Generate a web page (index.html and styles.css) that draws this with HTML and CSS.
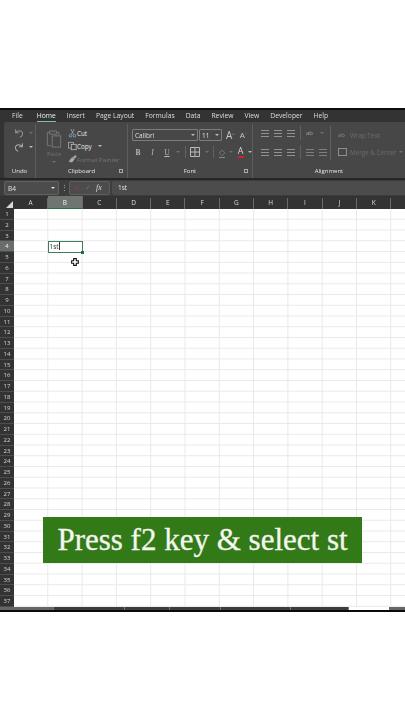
FILE: index.html
```html
<!DOCTYPE html>
<html lang="en">
<head>
<meta charset="utf-8">
<title>Excel - Press f2 key</title>
<link rel="stylesheet" href="styles.css">
</head>
<body>
<div class="top-space"></div>
<main class="excel">
  <nav class="tabs">
    <span>File</span><span class="active">Home</span><span>Insert</span><span>Page Layout</span><span>Formulas</span><span>Data</span><span>Review</span><span>View</span><span>Developer</span><span>Help</span>
  </nav>
  <section class="ribbon">
    <div class="group g-undo">
      <div class="group-body undo-body">
        <div class="undo-row"><svg width="12" height="11" viewBox="0 0 14 12"><path d="M3 1v4h4M3 5c2-3 7-3 8 0 .7 2.500-1 4.500-3 5.500" fill="none" stroke="#8d8d8d" stroke-width="1.200"/></svg><i class="caret dim"></i></div>
        <div class="undo-row"><svg width="12" height="11" viewBox="0 0 14 12"><path d="M11 1v4H7M11 5C9 2 4 2 3 5c-.7 2.500 1 4.500 3 5.500" fill="none" stroke="#a8a8a8" stroke-width="1.200"/></svg><i class="caret"></i></div>
      </div>
      <div class="group-label">Undo</div>
    </div>
    <div class="group g-clip">
      <div class="group-body clip-body">
        <div class="paste">
          <svg width="16" height="20" viewBox="0 0 18 21"><path d="M4 3H1.500v15H6M12 3h2.500v3M4 1.500h8V5H4z" fill="none" stroke="#777" stroke-width="1.100"/><rect x="7" y="7" width="9.500" height="12.500" fill="none" stroke="#777" stroke-width="1.100"/></svg>
          <span>Paste</span><i class="caret dim"></i>
        </div>
        <div class="clip-list">
          <div class="clip-item"><svg width="9" height="10" viewBox="0 0 10 10"><path d="M3 .5 6 6M7 .5 4 6" stroke="#9a9fb0" fill="none"/><circle cx="2.800" cy="8" r="1.500" fill="none" stroke="#8fa3c8"/><circle cx="7.200" cy="8" r="1.500" fill="none" stroke="#8fa3c8"/></svg><span>Cut</span></div>
          <div class="clip-item"><svg width="9" height="10" viewBox="0 0 11 10"><rect x=".5" y=".5" width="6" height="7" fill="none" stroke="#aaa"/><rect x="4" y="3" width="6" height="6.500" fill="#444" stroke="#bbb"/></svg><span>Copy</span><i class="caret copy-caret"></i></div>
          <div class="clip-item dim-text"><svg width="9" height="10" viewBox="0 0 11 10"><path d="M1 8 5 3l3 2-3 4zM6 3l3-2.500 1.500 1.500L8 4.500" fill="#aaa" stroke="#aaa" stroke-width=".5"/></svg><span>Format Painter</span></div>
        </div>
      </div>
      <div class="group-label">Clipboard<b class="launcher"></b></div>
    </div>
    <div class="group g-font">
      <div class="group-body font-body">
        <div class="font-row">
          <div class="select font-name"><span>Calibri</span><i class="caret"></i></div>
          <div class="select font-size"><span>11</span><i class="caret"></i></div>
          <span class="grow">A<sup>^</sup></span><span class="grow small">A<sup>ˇ</sup></span>
        </div>
        <div class="format-row">
          <b class="f-btn bold">B</b><em class="f-btn">I</em><u class="f-btn">U</u><i class="caret dim"></i>
          <i class="sep"></i>
          <svg width="10" height="10" viewBox="0 0 10 10"><path d="M.5.500h9v9h-9zM5 .5v9M.5 5h9" fill="none" stroke="#bcbcbc"/></svg><i class="caret dim"></i>
          <i class="sep"></i>
          <span class="fill-icon">◇</span><i class="caret dim"></i>
          <span class="color-a">A</span><i class="caret"></i>
        </div>
      </div>
      <div class="group-label">Font<b class="launcher"></b></div>
    </div>
    <div class="group g-align">
      <div class="group-body align-body">
        <div class="align-icons">
          <div class="align-row">
            <i class="lines"></i><i class="lines"></i><i class="lines"></i><i class="sep tall"></i><span class="orient">ab</span><i class="caret dim"></i>
          </div>
          <div class="align-row">
            <i class="lines"></i><i class="lines"></i><i class="lines"></i><i class="sep tall"></i><i class="lines indent"></i><i class="lines indent"></i>
          </div>
        </div>
        <i class="sep full"></i>
        <div class="wrap-list">
          <div class="wrap-item"><span class="w-ico">ab</span><span>Wrap Text</span></div>
          <div class="wrap-item"><span class="m-ico"></span><span>Merge &amp; Center</span><i class="caret dim"></i></div>
        </div>
      </div>
      <div class="group-label">Alignment</div>
    </div>
  </section>
  <div class="ribbon-gap"></div>
  <section class="formula-bar">
    <div class="name-box"><span>B4</span><i class="caret light"></i></div>
    <span class="dots">⋮</span>
    <div class="fx-box"><span class="x">✕</span><span class="check">✓</span><em>fx</em></div>
    <div class="formula-input">1st</div>
  </section>
  <div class="col-head">
    <div class="corner"><i></i></div>
    <span>A</span><span class="sel">B</span><span>C</span><span>D</span><span>E</span><span>F</span><span>G</span><span>H</span><span>I</span><span>J</span><span>K</span><span class="last"></span>
  </div>
  <div class="sheet-wrap">
    <div class="row-head">
      <span>1</span><span>2</span><span>3</span><span class="sel">4</span><span>5</span><span>6</span><span>7</span><span>8</span><span>9</span><span>10</span><span>11</span><span>12</span><span>13</span><span>14</span><span>15</span><span>16</span><span>17</span><span>18</span><span>19</span><span>20</span><span>21</span><span>22</span><span>23</span><span>24</span><span>25</span><span>26</span><span>27</span><span>28</span><span>29</span><span>30</span><span>31</span><span>32</span><span>33</span><span>34</span><span>35</span><span>36</span><span>37</span>
    </div>
    <div class="cells">
      <div class="active-cell">1st<i class="text-caret"></i><i class="handle"></i></div>
      <svg class="cursor" width="8" height="8" viewBox="0 0 9 9"><path d="M3 .7h3v2.300h2.300v3H6v2.300H3V6H.7V3H3z" fill="#fff" stroke="#111" stroke-width="1.200"/></svg>
    </div>
  </div>
  <div class="caption">Press f2 key &amp; select st</div>
  <div class="tabs-bottom">
    <i class="b1"></i><i class="b2"></i><i class="b3"></i><i class="b4"></i><i class="b5"></i><i class="b6"></i><i class="b7"></i><i class="b8"></i>
  </div>
</main>
</body>
</html>
```
FILE: styles.css
```css
* { box-sizing: border-box; }
html, body { margin: 0; padding: 0; background: #fff; }
body { width: 405px; height: 720px; overflow: hidden; font-family: "Open Sans", "Liberation Sans", sans-serif; }
i, em, u, b { font-style: normal; }
.top-space { height: 108px; background: #fff; }
.excel { height: 504px; background: #333; border-top: 2px solid #0c0c0c; border-bottom: 2px solid #0a0a0a; display: flex; flex-direction: column; position: relative; }

.tabs { height: 12px; display: flex; background: #333; padding-left: 12px; font-size: 6.750px; line-height: 11px; color: #ddd; gap: 11px; white-space: nowrap; filter: blur(.25px); }
.tabs span { flex: none; }
.tabs .active { color: #f0f0f0; border-bottom: 1px solid #7fc09a; height: 12px; margin-left: 3px; }

.ribbon { height: 56px; margin: 0 0 0 4px; background: #474747; display: flex; border-radius: 2px 0 0 2px; filter: blur(.3px); }
.ribbon-gap { height: 2px; background: #262626; }
.group { display: flex; flex-direction: column; border-right: 1px solid #5e5e5e; flex: none; margin: 2px 0 0; }
.group-body { flex: 1; display: flex; min-height: 0; }
.group-label { height: 13px; font-size: 6px; line-height: 12px; color: #e4e4e4; text-align: center; position: relative; }
.launcher { position: absolute; right: 4px; top: 4px; width: 4px; height: 4px; border: 1px solid #aaa; }
.caret { display: inline-block; width: 0; height: 0; border: 2px solid transparent; border-top: 2.500px solid #bdbdbd; border-bottom: 0; flex: none; }
.caret.dim { border-top-color: #707070; }
.caret.light { border-top-color: #e0e0e0; }
.sep { display: block; width: 1px; height: 12px; background: #616161; flex: none; }

.g-undo { width: 32px; }
.undo-body { flex-direction: column; padding: 2px 0 0 9px; gap: 0; }
.undo-row { display: flex; align-items: center; gap: 4px; height: 14px; }

.g-clip { width: 92px; }
.clip-body { padding: 4px 0 0 9px; gap: 5px; }
.paste { width: 18px; display: flex; flex-direction: column; align-items: center; font-size: 5.500px; color: #727272; line-height: 8px; padding-top: 1px; }
.paste span { margin-top: 1px; }
.paste .caret { margin-top: 3px; }
.clip-list { display: flex; flex-direction: column; gap: 1px; margin-top: -1px; }
.clip-item { display: flex; align-items: center; gap: 0; font-size: 6.300px; color: #e8e8e8; height: 13px; white-space: nowrap; }
.copy-caret { margin-left: 6px; }
.dim-text { color: #767676; font-size: 6.100px; }

.g-font { width: 125px; }
.font-body { flex-direction: column; padding: 5px 0 0 4px; gap: 5px; }
.font-row { display: flex; align-items: center; height: 12px; gap: 1px; }
.select { height: 12px; border: 1px solid #7d7d7d; display: flex; align-items: center; justify-content: space-between; font-size: 6.500px; color: #e0e0e0; padding: 0 2px; border-radius: 1px; }
.font-name { width: 66px; }
.font-size { width: 23px; }
.grow { font-size: 10px; line-height: 12px; color: #c8c8c8; margin-left: 3px; }
.grow.small { font-size: 8px; margin-left: 4px; }
.grow sup { font-size: 4px; vertical-align: top; }
.format-row { display: flex; align-items: center; height: 12px; gap: 4.500px; padding-left: 1px; font-size: 7.500px; color: #b9b9b9; }
.f-btn { width: 10px; text-align: center; font-family: "Liberation Serif", serif; }
.bold { font-weight: 700; }
em.f-btn { font-style: italic; }
.fill-icon { font-size: 8px; color: #8a8a8a; line-height: 10px; border-bottom: 1px solid #8a8a8a; }
.color-a { font-size: 9px; color: #d8d8d8; line-height: 10px; border-bottom: 2px solid #d3202c; }

.g-align { flex: 1; border-right: 0; }
.align-body { padding: 2px 0 0 8px; gap: 3px; }
.align-icons { display: flex; flex-direction: column; gap: 5px; }
.align-row { display: flex; align-items: center; gap: 5px; height: 14px; }
.lines { display: block; width: 8px; height: 7px; flex: none; background: repeating-linear-gradient(180deg, #929292 0 1px, transparent 1px 3px); }
.lines.indent { background: repeating-linear-gradient(180deg, #7f7f7f 0 1px, transparent 1px 3px); }
.sep.tall { height: 14px; }
.sep.full { height: 34px; }
.orient { font-size: 6px; color: #a0a0a0; width: 9px; }
.wrap-list { display: flex; flex-direction: column; gap: 3px; padding: 2px 0 0 4px; }
.wrap-item { display: flex; align-items: center; gap: 3px; height: 14px; font-size: 6.300px; color: #6d6d6d; white-space: nowrap; }
.w-ico { font-size: 6px; color: #888; width: 9px; }
.m-ico { width: 9px; height: 8px; border: 1px solid #8d8d8d; }

.formula-bar { height: 16px; display: flex; align-items: center; background: #3d3d3d; padding-left: 4px; filter: blur(.25px); }
.name-box { width: 55px; height: 14px; background: #4c4c4c; border: 1px solid #626262; border-radius: 2px; display: flex; align-items: center; justify-content: space-between; padding: 0 3px; font-size: 6.500px; color: #e5e5e5; }
.dots { width: 10px; text-align: center; font-size: 7px; color: #bbb; line-height: 12px; }
.fx-box { width: 41px; height: 14px; background: #4c4c4c; border: 1px solid #5d5d5d; border-radius: 2px; display: flex; align-items: center; gap: 5px; padding-left: 4px; font-size: 7px; line-height: 10px; }
.x { color: #8a3f3f; }
.check { color: #5d7a66; }
.fx-box em { font-family: "Liberation Serif", serif; font-style: italic; color: #ddd; font-size: 8px; }
.formula-input { flex: 1; height: 14px; margin-left: 2px; background: #4c4c4c; border-radius: 2px 0 0 2px; font-size: 6.500px; line-height: 13px; color: #e5e5e5; padding-left: 6px; }

.col-head { height: 13px; display: flex; background: #333; font-size: 6.500px; line-height: 13px; color: #dcdcdc; flex: none; filter: blur(.25px); }
.corner { width: 14px; flex: none; position: relative; }
.corner i { position: absolute; right: 1px; bottom: 1px; border-style: solid; border-width: 0 0 7px 7px; border-color: transparent transparent #d8d8d8 transparent; }
.col-head span { width: 34.300px; flex: none; text-align: center; border-right: 1px solid #6a6a6a; margin: 2px 0 0; line-height: 10px; }
.col-head .sel { background: #6f7570; color: #f0f0f0; margin-top: 0; line-height: 14px; border-bottom: 1px solid #217346; }
.col-head .last { flex: 1; border: 0; }

.sheet-wrap { flex: 1; display: flex; min-height: 0; background: #fff; }
.row-head { width: 14px; flex: none; display: flex; flex-direction: column; background: #333; filter: blur(.25px); }
.row-head span { height: 10.750px; flex: none; font-size: 6px; line-height: 10.500px; color: #d6d6d6; text-align: center; border-bottom: 1px solid #4d4d4d; }
.row-head .sel { background: #6a6e6b; color: #f0f0f0; }
.cells { flex: 1; position: relative; background-color: #fff; background-image: linear-gradient(#e9e9e9 1px, transparent 1px), linear-gradient(90deg, #e9e9e9 1px, transparent 1px); background-size: 34.300px 10.750px; background-position: 33.300px 9.750px; }
.active-cell { position: absolute; left: 33.500px; top: 32px; width: 35.500px; height: 12px; border: 1px solid #3d7f5e; background: #fff; font-size: 6.500px; line-height: 10px; color: #333; padding-left: 1px; filter: blur(.2px); }
.text-caret { display: inline-block; width: 1px; height: 8px; background: #333; vertical-align: -1px; }
.handle { position: absolute; right: -2px; bottom: -2px; width: 3px; height: 3px; background: #1f6e43; }
.cursor { position: absolute; left: 57px; top: 49px; }
.caption { position: absolute; left: 43px; top: 407px; width: 319px; height: 46px; background: #327a18; color: #f4f6ef; font-family: "Liberation Serif", serif; font-size: 31px; line-height: 46px; text-align: center; white-space: nowrap; -webkit-text-stroke: .3px #f4f6ef; }

.tabs-bottom { position: absolute; left: 0; right: 0; bottom: 0; height: 3px; display: flex; background: #555; }
.tabs-bottom i { display: block; height: 3px; flex: none; background: #3d3d3d; border-right: 1px solid #777; }
.tabs-bottom .b1 { width: 54px; background: #666; }
.tabs-bottom .b2 { width: 71px; }
.tabs-bottom .b3 { width: 45px; }
.tabs-bottom .b4 { width: 51px; }
.tabs-bottom .b5 { width: 70px; }
.tabs-bottom .b6 { width: 58px; }
.tabs-bottom .b7 { width: 40px; background: #fff; border: 0; }
.tabs-bottom .b8 { flex: 1; background: #666; border: 0; }
```
